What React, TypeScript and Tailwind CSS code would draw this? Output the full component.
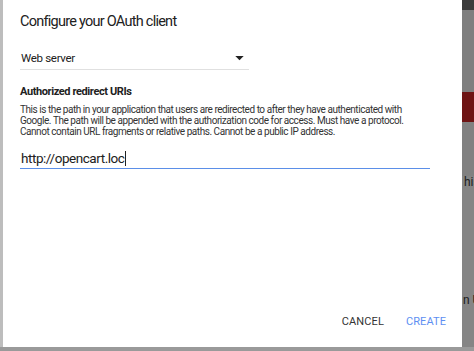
function BackdropRight() {
  return (
    <div className="flex h-full w-[12px] flex-col overflow-hidden whitespace-nowrap bg-[#858585] text-[12px] leading-none text-[#1d1d1d]">
      <div className="h-[10px] bg-[#3c3c3c]" />
      <div className="h-[82px] bg-[#7f7f7f]" />
      <div className="h-[30px] bg-[#6e1414]" />
      <div className="h-[54px] bg-[#818181]" />
      <div className="pl-[2px]">his</div>
      <div className="h-[106px]" />
      <div className="pl-[1px]">n U</div>
    </div>
  );
}

export default function App() {
  return (
    <div
      className="flex h-[351px] w-[474px] flex-col overflow-hidden bg-[#8a8a8a]"
      style={{ fontFamily: "Roboto, 'Liberation Sans', sans-serif" }}
    >
      <div className="flex h-[347px]">
        <div className="w-[3px] bg-[#bdbdbd]" />
        <div className="flex w-[459px] flex-col bg-white pl-[17px] pr-[32px] text-[#212121]">
          <h1 className="mt-[12px] text-[14.5px] leading-[20px] font-normal tracking-[-0.75px]">
            Configure your OAuth client
          </h1>

          <div className="mt-[18px] flex w-[229px] items-center justify-between border-b border-[#e0e0e0] pb-[3px] pl-[1px]">
            <span className="text-[11.5px] leading-[16px] tracking-[-0.3px]">Web server</span>
            <svg width="9" height="5" viewBox="0 0 10 6" className="mr-[5px]">
              <path d="M0 0 L10 0 L5 5 Z" fill="#212121" />
            </svg>
          </div>

          <div className="mt-[15px] text-[11px] leading-[14px] font-bold tracking-[-0.4px]">
            Authorized redirect URIs
          </div>
          <p className="mt-[5px] whitespace-nowrap text-[10px] leading-[11px] tracking-[-0.45px] text-[#333]">
            This is the path in your application that users are redirected to after they have authenticated with
            <br />
            Google. The path will be appended with the authorization code for access. Must have a protocol.
            <br />
            Cannot contain URL fragments or relative paths. Cannot be a public IP address.
          </p>

          <div className="mt-[11px] flex items-center border-b-[1.5px] border-[#5b8fe8] pl-[1px]">
            <span className="text-[13.5px] leading-[20px] tracking-[-0.45px]">http://opencart.loc</span>
            <span className="ml-[1px] h-[15px] w-px bg-[#212121]" />
          </div>

          <div className="flex-1" />

          <div className="mb-[18px] mr-[-16px] flex justify-end gap-[22px] text-[11px] leading-[14px] tracking-[0.1px]">
            <span className="text-[#333]">CANCEL</span>
            <span className="text-[#5e8ff2]">CREATE</span>
          </div>
        </div>
        <BackdropRight />
      </div>
      <div className="h-[4px] bg-[#9a9a9a]" />
    </div>
  );
}
